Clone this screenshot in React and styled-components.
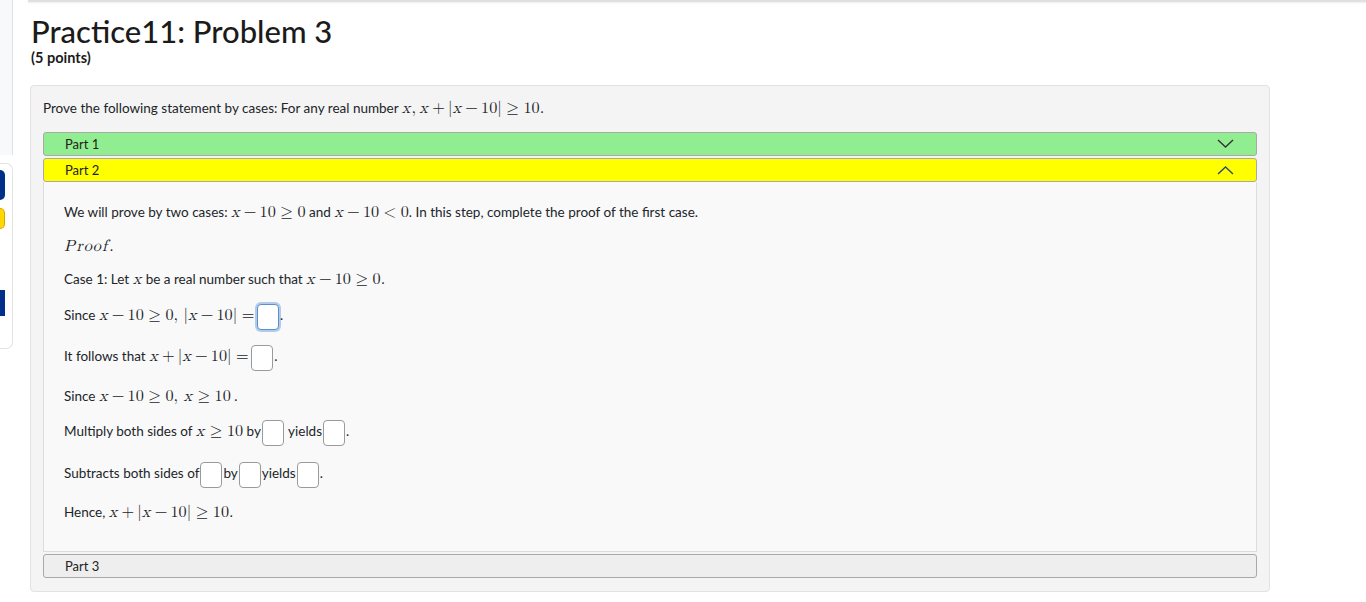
import React from 'react';
import styled, { createGlobalStyle } from 'styled-components';

const Global = createGlobalStyle`
  html, body { margin: 0; padding: 0; background: #fff; }
  body {
    font-family: "Lato", "Open Sans", sans-serif;
    font-size: 13.5px;
    color: #212529;
  }
`;

const Page = styled.div`
  display: flex;
  gap: 15px;
  min-height: 602px;
`;

const Sidebar = styled.div`
  width: 13px;
  flex: none;
  display: flex;
  flex-direction: column;
  gap: 8px;
`;

const SideTop = styled.div`
  height: 155px;
  background: #f8f9fa;
  border-right: 1px solid #dee2e6;
`;

const SideCard = styled.div`
  height: 186px;
  background: #fff;
  border: 1px solid #e3e3e3;
  border-left: none;
  border-radius: 0 7px 7px 0;
  padding-top: 6px;
  box-sizing: border-box;
`;

const SideChip = styled.div`
  width: 5px;
  height: ${p => p.$h}px;
  margin-top: ${p => p.$mt}px;
  background: ${p => p.$bg};
  border: ${p => (p.$border ? `1px solid ${p.$border}` : 'none')};
  border-left: none;
  border-radius: ${p => p.$r};
  box-sizing: border-box;
`;

const Main = styled.div`
  flex: 1;
`;

const TopLine = styled.div`
  height: 2px;
  background: #e0e0e0;
  box-shadow: 0 1px 2px rgba(0, 0, 0, 0.08);
`;

const Content = styled.div`
  padding: 0 96px 0 2px;
`;

const Title = styled.h1`
  margin: 11px 0 0 1px;
  font-family: "Lato", "Open Sans", sans-serif;
  font-size: 31px;
  font-weight: 500;
  line-height: 36px;
  color: #1b1b1b;
`;

const Points = styled.div`
  margin-left: 1px;
  font-size: 14.5px;
  line-height: 18px;
  font-weight: 700;
  color: #1b1b1b;
`;

const Card = styled.div`
  margin-top: 18px;
  background: #f4f4f4;
  border: 1px solid #e2e2e2;
  border-radius: 4px;
  padding: 12px 12px 13px 12px;
`;

const Statement = styled.p`
  margin: 0 0 14px 0;
  line-height: 20px;
`;

const PartHeader = styled.div`
  display: flex;
  align-items: center;
  justify-content: space-between;
  height: 22px;
  padding: 0 22px 0 21px;
  margin-top: ${p => p.$mt || 0}px;
  background: ${p => p.$bg};
  border: 1px solid #a9a9a9;
  border-radius: 3px;
  font-size: 13px;
  color: #222;
`;

const PartBody = styled.div`
  background: #f9f9f9;
  border: 1px solid #dcdcdc;
  border-top: none;
  padding: 20px 20px 15px 20px;
`;

const Para = styled.p`
  margin: 0 0 13.5px 0;
  line-height: 20px;
  color: #212529;
`;

const MathSpan = styled.span`
  font-family: "Latin Modern Math", "Liberation Serif", "DejaVu Serif", serif;
  font-size: 1.2em;
  line-height: 20px;
  white-space: nowrap;
`;

const Var = styled.i`
  font-style: italic;
  padding-right: 0.06em;
  ${p => (p.$title ? 'letter-spacing: 0.07em;' : '')}
`;

const Op = styled.span`
  margin: 0 0.2em;
`;

const Rel = styled.span`
  margin: 0 ${p => (p.$tight ? '0.1em' : '0.28em')} 0 0.28em;
`;

const Box = styled.span`
  display: inline-block;
  width: 20px;
  height: 24px;
  margin: 1px 1px;
  vertical-align: middle;
  background: #fff;
  border: 1px solid ${p => (p.$focus ? '#5b8fd0' : '#9a9a9a')};
  border-radius: 4px;
  box-shadow: ${p => (p.$focus ? '0 0 0 2px rgba(120, 165, 220, 0.55)' : 'none')};
`;

const Chevron = ({ up, color }) => (
  <svg width="17" height="10" viewBox="0 0 17 10">
    <polyline
      points={up ? '1,9 8.5,2 16,9' : '1,1 8.5,8 16,1'}
      fill="none"
      stroke={color}
      strokeWidth="1.4"
    />
  </svg>
);

const X = () => <Var>x</Var>;

const App = () => {
  return (
    <Page>
      <Global />
      <Sidebar>
        <SideTop />
        <SideCard>
          <SideChip $h={30} $mt={0} $bg="#00308a" $r="0 8px 8px 0" />
          <SideChip $h={21} $mt={8} $bg="#ffd800" $border="#e0a200" $r="0 5px 5px 0" />
          <SideChip $h={26} $mt={61} $bg="#00308a" $r="0" />
        </SideCard>
      </Sidebar>
      <Main>
        <TopLine />
        <Content>
          <Title>Practice11: Problem 3</Title>
          <Points>(5 points)</Points>
          <Card>
            <Statement>
              Prove the following statement by cases: For any real number <MathSpan><X />,</MathSpan>{' '}
              <MathSpan>
                <X /><Op>+</Op>|<X /><Op>−</Op>10|<Rel>≥</Rel>10.
              </MathSpan>
            </Statement>
            <PartHeader $bg="#90ee90">
              <span>Part 1</span>
              <Chevron color="#333" />
            </PartHeader>
            <PartHeader $bg="#ffff00" $mt={2}>
              <span>Part 2</span>
              <Chevron up color="#2b4a7a" />
            </PartHeader>
            <PartBody>
              <Para>
                We will prove by two cases: <MathSpan><X /><Op>−</Op>10<Rel>≥</Rel>0</MathSpan> and{' '}
                <MathSpan><X /><Op>−</Op>10<Rel>&lt;</Rel>0</MathSpan>. In this step, complete the proof of the first case.
              </Para>
              <Para>
                <MathSpan><Var $title>Proof</Var>.</MathSpan>
              </Para>
              <Para>
                Case 1: Let <MathSpan><X /></MathSpan> be a real number such that{' '}
                <MathSpan><X /><Op>−</Op>10<Rel>≥</Rel>0.</MathSpan>
              </Para>
              <Para>
                Since <MathSpan><X /><Op>−</Op>10<Rel>≥</Rel>0, |<X /><Op>−</Op>10|<Rel $tight>=</Rel></MathSpan>
                <Box $focus />.
              </Para>
              <Para>
                It follows that <MathSpan><X /><Op>+</Op>|<X /><Op>−</Op>10|<Rel $tight>=</Rel></MathSpan>
                <Box />.
              </Para>
              <Para>
                Since <MathSpan><X /><Op>−</Op>10<Rel>≥</Rel>0, <X /><Rel>≥</Rel>10</MathSpan> .
              </Para>
              <Para>
                Multiply both sides of <MathSpan><X /><Rel>≥</Rel>10</MathSpan> by<Box /> yields<Box />.
              </Para>
              <Para>
                Subtracts both sides of<Box />by<Box />yields<Box />.
              </Para>
              <Para>
                Hence, <MathSpan><X /><Op>+</Op>|<X /><Op>−</Op>10|<Rel>≥</Rel>10.</MathSpan>
              </Para>
            </PartBody>
            <PartHeader $bg="#eeeeee" $mt={2}>
              <span>Part 3</span>
            </PartHeader>
          </Card>
        </Content>
      </Main>
    </Page>
  );
};

export default App;
